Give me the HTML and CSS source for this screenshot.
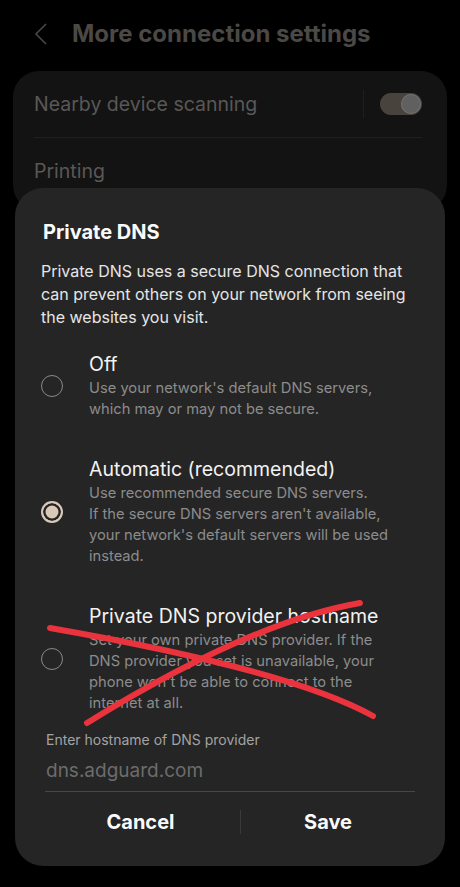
FILE: index.html
```html
<!DOCTYPE html>
<html lang="en">
<head>
  <meta charset="UTF-8" />
  <title>More connection settings</title>
  <link rel="stylesheet" href="styles.css">
</head>
<body>
  <header class="topbar">
    <svg class="back" width="14" height="22" viewBox="0 0 14 22">
      <path d="M12 1 L2 11 L12 21" fill="none" stroke="#4a4846" stroke-width="1.6" />
    </svg>
    <h1>More connection settings</h1>
  </header>

  <section class="card">
    <div class="row">
      <span>Nearby device scanning</span>
      <div class="row-end">
        <span class="vsep"></span>
        <span class="switch"><span class="knob"></span></span>
      </div>
    </div>
    <div class="divider"></div>
    <div class="row">
      <span>Printing</span>
    </div>
  </section>

  <div class="sheet">
    <h2>Private DNS</h2>
    <p class="desc">Private DNS uses a secure DNS connection that can prevent others on your network from seeing the websites you visit.</p>

    <div class="options">
      <div class="option">
        <span class="radio"></span>
        <div class="option-text">
          <div class="option-title">Off</div>
          <div class="option-sub">Use your network's default DNS servers, which may or may not be secure.</div>
        </div>
      </div>

      <div class="option">
        <span class="radio checked"></span>
        <div class="option-text">
          <div class="option-title">Automatic (recommended)</div>
          <div class="option-sub">Use recommended secure DNS servers.<br>If the secure DNS servers aren't available, your network's default servers will be used instead.</div>
        </div>
      </div>

      <div class="option">
        <span class="radio"></span>
        <div class="option-text">
          <div class="option-title">Private DNS provider hostname</div>
          <div class="option-sub">Set your own private DNS provider. If the DNS provider you set is unavailable, your phone won't be able to connect to the internet at all.</div>
        </div>
      </div>
    </div>

    <div class="field">
      <label>Enter hostname of DNS provider</label>
      <div class="field-value">dns.adguard.com</div>
    </div>

    <div class="actions">
      <button class="btn btn-cancel">Cancel</button>
      <span class="btn-sep"></span>
      <button class="btn">Save</button>
    </div>
  </div>

  <!-- red cross drawn over the third option -->
  <svg class="scribble" width="460" height="887" viewBox="0 0 460 887">
    <path d="M50 628 Q290 670 373 716" fill="none" stroke="#ea333d" stroke-width="6" stroke-linecap="round" />
    <path d="M87 723 Q250 622 360 603" fill="none" stroke="#ea333d" stroke-width="6" stroke-linecap="round" />
  </svg>
</body>
</html>
```

FILE: styles.css
```css
body {
  margin: 0;
  width: 460px;
  height: 887px;
  background-color: #000;
  font-family: Inter, Roboto, sans-serif;
  position: relative;
  overflow: hidden;
}

.topbar {
  display: flex;
  align-items: center;
  height: 66px;
  padding-left: 34px;
}

.back {
  margin-right: 24px;
  margin-top: 1px;
}

.topbar h1 {
  margin: 0;
  font-size: 24px;
  font-weight: bold;
  color: #4b4845;
}

.card {
  margin: 5px 13px 0;
  background-color: #131313;
  border-radius: 26px;
  height: 140px;
  padding: 0 25px 0 21px;
}

.row {
  display: flex;
  align-items: center;
  justify-content: space-between;
  height: 66px;
  font-size: 19.5px;
  color: #5a5856;
}

.row-end {
  display: flex;
  align-items: center;
}

.vsep {
  width: 1px;
  height: 28px;
  background-color: #1e1e1e;
  margin-right: 16px;
}

.switch {
  display: flex;
  justify-content: flex-end;
  align-items: center;
  width: 42px;
  height: 22px;
  border-radius: 11px;
  background-color: #49433d;
}

.knob {
  width: 20px;
  height: 20px;
  margin-right: 1px;
  border-radius: 50%;
  background-color: #606060;
  box-shadow: inset 0 0 0 1px #6f6f6f;
}

.divider {
  height: 1px;
  background-color: #1f1f1f;
}

.sheet {
  position: absolute;
  top: 188px;
  left: 15px;
  right: 15px;
  height: 678px;
  box-sizing: border-box;
  background-color: #252525;
  border-radius: 28px;
  padding: 31px 26px 0;
}

.sheet h2 {
  margin: 0 0 0 2px;
  font-size: 20px;
  line-height: 26px;
  font-weight: bold;
  color: #fafafa;
}

.desc {
  margin: 15px 0 0;
  font-size: 16px;
  line-height: 23px;
  color: #e6e6e6;
}

.options {
  display: flex;
  flex-direction: column;
  gap: 36px;
  margin-top: 22px;
}

.option {
  display: flex;
  align-items: center;
}

.radio {
  flex: none;
  width: 22px;
  height: 22px;
  box-sizing: border-box;
  border: 1.6px solid #8a8a8a;
  border-radius: 50%;
  margin-right: 26px;
}

.radio.checked {
  border: 2.5px solid #d9c9b8;
  background-color: #d9c9b8;
  box-shadow: inset 0 0 0 2.5px #252525;
}

.option-text {
  flex: 1;
  padding-right: 22px;
}

.option-title {
  font-size: 19.5px;
  line-height: 26px;
  color: #f2f2f2;
}

.option-sub {
  margin-top: 1px;
  font-size: 14.7px;
  line-height: 21px;
  color: #8c8c8c;
}

.field {
  margin: 17px 4px 0;
  padding-bottom: 8px;
  border-bottom: 1px solid #474747;
}

.field label {
  display: block;
  padding-left: 1px;
  font-size: 14px;
  line-height: 18px;
  color: #a3a3a3;
}

.field-value {
  margin-top: 10px;
  padding-left: 1px;
  font-size: 19px;
  line-height: 24px;
  color: #6c6c6c;
}

.actions {
  display: flex;
  align-items: center;
  height: 44px;
  margin: 8px 4px 0 0;
}

.btn {
  flex: 1;
  height: 44px;
  padding: 0;
  border: none;
  background: none;
  font-family: inherit;
  font-size: 20px;
  font-weight: bold;
  color: #fafafa;
}

.btn-cancel {
  flex: none;
  width: 199px;
}

.btn-sep {
  width: 1px;
  height: 24px;
  background-color: #3a3a3a;
}

.scribble {
  position: absolute;
  top: 0;
  left: 0;
  pointer-events: none;
}
```
